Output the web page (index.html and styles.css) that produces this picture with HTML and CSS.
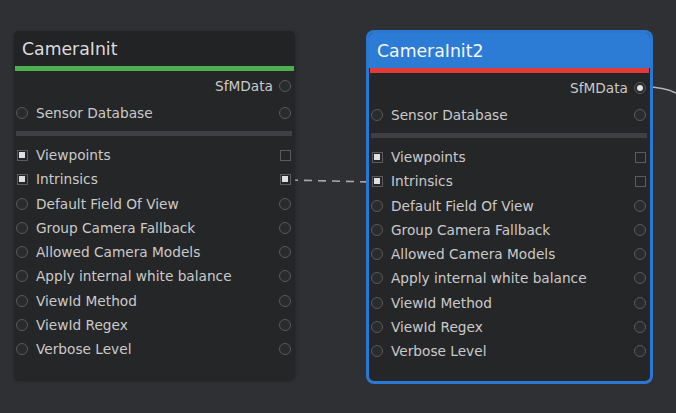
FILE: index.html
```html
<!DOCTYPE html>
<html>
<head>
<meta charset="utf-8">
<link rel="stylesheet" href="styles.css">
</head>
<body>
<div class="canvas">
  <svg class="edges" width="676" height="413" viewBox="0 0 676 413">
    <path d="M290 180 L372 182" stroke="#a9a9a9" stroke-width="1.6" stroke-dasharray="8 6" fill="none"/>
    <path d="M645 87 C 660 87, 668 89, 676 93" stroke="#b5b5b5" stroke-width="1.4" fill="none"/>
  </svg>

  <div class="node node-a">
    <div class="title">CameraInit</div>
    <div class="bar bar-green"></div>
    <div class="outputs">
      <div class="row out"><span class="label">SfMData</span><span class="port"></span></div>
    </div>
    <div class="row"><span class="port"></span><span class="label">Sensor Database</span><span class="port"></span></div>
    <div class="sep"></div>
    <div class="attrs">
      <div class="row"><span class="sq on"></span><span class="label">Viewpoints</span><span class="sq"></span></div>
      <div class="row"><span class="sq on"></span><span class="label">Intrinsics</span><span class="sq on"></span></div>
      <div class="row"><span class="port"></span><span class="label">Default Field Of View</span><span class="port"></span></div>
      <div class="row"><span class="port"></span><span class="label">Group Camera Fallback</span><span class="port"></span></div>
      <div class="row"><span class="port"></span><span class="label">Allowed Camera Models</span><span class="port"></span></div>
      <div class="row"><span class="port"></span><span class="label">Apply internal white balance</span><span class="port"></span></div>
      <div class="row"><span class="port"></span><span class="label">ViewId Method</span><span class="port"></span></div>
      <div class="row"><span class="port"></span><span class="label">ViewId Regex</span><span class="port"></span></div>
      <div class="row"><span class="port"></span><span class="label">Verbose Level</span><span class="port"></span></div>
    </div>
  </div>

  <div class="node node-b">
    <div class="title title-sel">CameraInit2</div>
    <div class="bar bar-red"></div>
    <div class="outputs">
      <div class="row out"><span class="label">SfMData</span><span class="port linked"></span></div>
    </div>
    <div class="row"><span class="port"></span><span class="label">Sensor Database</span><span class="port"></span></div>
    <div class="sep"></div>
    <div class="attrs">
      <div class="row"><span class="sq on"></span><span class="label">Viewpoints</span><span class="sq"></span></div>
      <div class="row"><span class="sq on"></span><span class="label">Intrinsics</span><span class="sq"></span></div>
      <div class="row"><span class="port"></span><span class="label">Default Field Of View</span><span class="port"></span></div>
      <div class="row"><span class="port"></span><span class="label">Group Camera Fallback</span><span class="port"></span></div>
      <div class="row"><span class="port"></span><span class="label">Allowed Camera Models</span><span class="port"></span></div>
      <div class="row"><span class="port"></span><span class="label">Apply internal white balance</span><span class="port"></span></div>
      <div class="row"><span class="port"></span><span class="label">ViewId Method</span><span class="port"></span></div>
      <div class="row"><span class="port"></span><span class="label">ViewId Regex</span><span class="port"></span></div>
      <div class="row"><span class="port"></span><span class="label">Verbose Level</span><span class="port"></span></div>
    </div>
  </div>
</div>
</body>
</html>
```
FILE: styles.css
```css
html, body {
  margin: 0;
  padding: 0;
  background: #2f3033;
}
.canvas {
  position: relative;
  width: 676px;
  height: 413px;
  overflow: hidden;
  background: #2f3033;
  font-family: "DejaVu Sans", "Liberation Sans", sans-serif;
}
.edges {
  position: absolute;
  left: 0;
  top: 0;
}
.node {
  position: absolute;
  width: 281px;
  height: 349px;
  box-sizing: border-box;
  background: #252628;
  border-radius: 5px;
  display: flex;
  flex-direction: column;
  box-shadow: 0 1px 3px rgba(0,0,0,0.35);
}
.node-a {
  left: 14px;
  top: 31px;
}
.node-b {
  left: 369px;
  top: 33px;
  height: 348px;
  box-shadow: 0 0 0 3px #2a78d2;
}
.title {
  height: 35px;
  padding-left: 8px;
  display: flex;
  align-items: center;
  font-size: 17.3px;
  color: #dcdcdc;
  background: #222325;
  border-radius: 5px 5px 0 0;
}
.title-sel {
  background: #2c7cd5;
  color: #f4f7fb;
  padding-left: 8px;
}
.bar {
  height: 5px;
  margin: 0 1px;
}
.bar-green { background: #4caf50; }
.bar-red { background: #e53935; }
.outputs {
  padding-top: 3px;
  margin-bottom: 3px;
}
.row {
  height: 24px;
  display: flex;
  align-items: center;
  padding: 0 4px 0 2px;
  font-size: 13.7px;
  color: #cacaca;
}
.row .label {
  flex: 1;
  padding-left: 8px;
  white-space: nowrap;
}
.row.out .label {
  text-align: right;
  padding-left: 0;
  padding-right: 6px;
}
.port {
  width: 10px;
  height: 10px;
  border: 1.5px solid #58595b;
  border-radius: 50%;
  background: #2a2b2d;
  flex: none;
  position: relative;
}
.port.linked::after {
  content: "";
  position: absolute;
  left: 2px;
  top: 2px;
  width: 6px;
  height: 6px;
  border-radius: 50%;
  background: #e4e4e4;
}
.sq {
  width: 9px;
  height: 9px;
  border: 1.5px solid #5a5b5d;
  background: #252628;
  flex: none;
  position: relative;
  margin: 0 0.5px;
}
.sq.on::after {
  content: "";
  position: absolute;
  left: 1.5px;
  top: 1.5px;
  width: 6px;
  height: 6px;
  background: #e0e0e0;
}
.sep {
  height: 5px;
  margin: 6px 3px 7px 2px;
  background: #3f4043;
}
.attrs .row {
  height: 24.25px;
}
```
